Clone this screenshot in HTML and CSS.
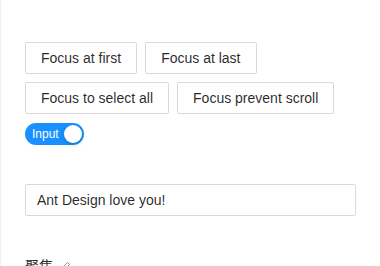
FILE: index.html
```html
<!DOCTYPE html>
<html lang="en">
<head>
    <title>Focus</title>
    <meta charset="utf-8">
    <link rel="stylesheet" href="styles.css">
</head>
<body>

    <div class="code-box">
        <div class="demo">
            <div class="btn-row">
                <button class="btn">Focus at first</button>
                <button class="btn">Focus at last</button>
                <button class="btn">Focus to select all</button>
                <button class="btn">Focus prevent scroll</button>
            </div>

            <div class="switch checked">
                <span class="switch-inner">Input</span>
                <span class="switch-handle"></span>
            </div>

            <input class="text-input" type="text" value="Ant Design love you!">
        </div>

        <div class="meta">
            <span class="title">聚焦</span>
            <svg class="edit-icon" viewBox="0 0 16 16" width="13" height="13">
                <path d="M3 13 L3 10.5 L10.5 3 L13 5.5 L5.5 13 Z" fill="none" stroke="#8c8c8c" stroke-width="1.2"/>
            </svg>
        </div>
    </div>

</body>
</html>
```

FILE: styles.css
```css
/* page */
body {
    margin: 0;
    height: 266px;
    overflow: hidden;
    background: #fff;
    font-family: "Liberation Sans", Arial, "Noto Sans CJK SC", sans-serif;
    font-size: 14px;
    color: rgba(0, 0, 0, 0.85);
}
.code-box {
    border-left: 1px solid #f0f0f0;
    height: 266px;
}
.demo {
    padding: 42px 24px 0 24px;
}

/* buttons */
.btn-row {
    display: flex;
    flex-wrap: wrap;
    gap: 8px;
}
.btn {
    height: 32px;
    padding: 4px 15px;
    font-family: inherit;
    font-size: 14px;
    line-height: 22px;
    color: rgba(0, 0, 0, 0.85);
    background: #fff;
    border: 1px solid #d9d9d9;
    border-radius: 2px;
    cursor: pointer;
}

/* switch */
.switch {
    position: relative;
    display: inline-flex;
    align-items: center;
    margin-top: 9px;
    height: 22px;
    min-width: 44px;
    border-radius: 100px;
    background: #1890ff;
    color: #fff;
    font-size: 12px;
    box-sizing: border-box;
}
.switch-inner {
    padding: 0 25px 0 7px;
    line-height: 22px;
}
.switch-handle {
    position: absolute;
    top: 2px;
    right: 2px;
    width: 18px;
    height: 18px;
    border-radius: 50%;
    background: #fff;
    box-shadow: 0 2px 4px rgba(0, 35, 11, 0.2);
}

/* input */
.text-input {
    display: block;
    box-sizing: border-box;
    width: 100%;
    height: 32px;
    margin-top: 39px;
    padding: 4px 11px;
    font-family: inherit;
    font-size: 14px;
    color: rgba(0, 0, 0, 0.85);
    border: 1px solid #d9d9d9;
    border-radius: 2px;
    outline: none;
}

/* meta title */
.meta {
    display: flex;
    align-items: center;
    gap: 6px;
    padding: 0 24px;
    margin-top: 39px;
    line-height: 22px;
}
.title {
    font-weight: normal;
}
```
